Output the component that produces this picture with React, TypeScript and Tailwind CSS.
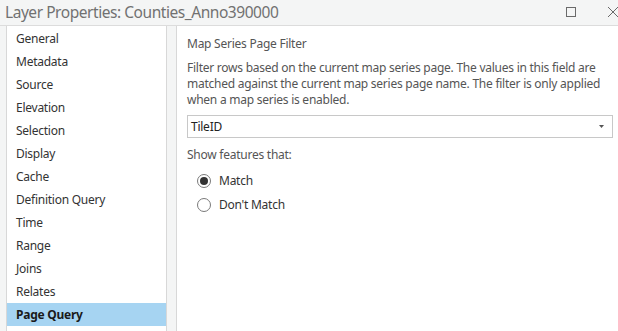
import React from "react";

const items = [
  "General",
  "Metadata",
  "Source",
  "Elevation",
  "Selection",
  "Display",
  "Cache",
  "Definition Query",
  "Time",
  "Range",
  "Joins",
  "Relates",
  "Page Query",
];

export default function App() {
  return (
    <div
      className="w-[618px] h-[331px] overflow-hidden bg-[#f4f5f5] flex flex-col tracking-[-0.25px]"
      style={{ fontFamily: '"Noto Sans", "Open Sans", sans-serif' }}
    >
      <div className="h-[26px] shrink-0 border-b border-[#dcdcdc] flex items-center pl-[5px] relative">
        <span className="text-[15.5px] text-[#717171] leading-none tracking-[-0.45px]">
          Layer Properties: Counties_Anno390000
        </span>
        <div className="absolute left-[566px] top-[7px] w-[10px] h-[10px] border border-[#6a6a6a]" />
        <svg className="absolute left-[607px] top-[6px]" width="12" height="12" viewBox="0 0 12 12">
          <path d="M1 1 L11 11 M11 1 L1 11" stroke="#6a6a6a" strokeWidth="1" />
        </svg>
      </div>
      <div className="flex flex-1 min-h-0 pl-[6px] gap-[9px]">
        <div className="w-[161px] shrink-0 bg-white border-l border-r border-[#d8d8d8] flex flex-col">
          {items.map((it, i) => (
            <div
              key={it}
              className={
                "h-[23px] shrink-0 flex items-center pl-[9px] text-[12px] " +
                (i === 0 ? "mt-[1px] " : "") +
                (i === items.length - 1
                  ? "bg-[#a6d4f2] font-bold text-[#1a1a1a]"
                  : "text-[#333333]")
              }
            >
              {it}
            </div>
          ))}
        </div>
        <div className="flex-1 bg-white border-l border-[#d8d8d8] pl-[10px] pr-[5px] pt-[9px] text-[12px] text-[#555555]">
          <div className="h-[18px] flex items-center">Map Series Page Filter</div>
          <div className="mt-[7px] leading-[16px]">
            Filter rows based on the current map series page. The values in this field are matched against the current map series page name. The filter is only applied when a map series is enabled.
          </div>
          <div className="mt-[7px] h-[23px] border border-[#c8c8c8] flex items-center justify-between pl-[3px] pr-[8px] text-[#222222]">
            <span>TileID</span>
            <svg width="5" height="3" viewBox="0 0 5 3">
              <path d="M0 0 L5 0 L2.5 3 Z" fill="#555555" />
            </svg>
          </div>
          <div className="mt-[8px] h-[18px] flex items-center">Show features that:</div>
          <div className="mt-[5px] pl-[10px] flex flex-col text-[#333333]">
            <div className="h-[24px] flex items-center gap-[8px]">
              <div className="w-[14px] h-[14px] rounded-full border border-[#7a7a7a] flex items-center justify-center">
                <div className="w-[8px] h-[8px] rounded-full bg-[#333333]" />
              </div>
              <span>Match</span>
            </div>
            <div className="h-[24px] flex items-center gap-[8px]">
              <div className="w-[14px] h-[14px] rounded-full border border-[#7a7a7a]" />
              <span>Don't Match</span>
            </div>
          </div>
        </div>
      </div>
    </div>
  );
}
